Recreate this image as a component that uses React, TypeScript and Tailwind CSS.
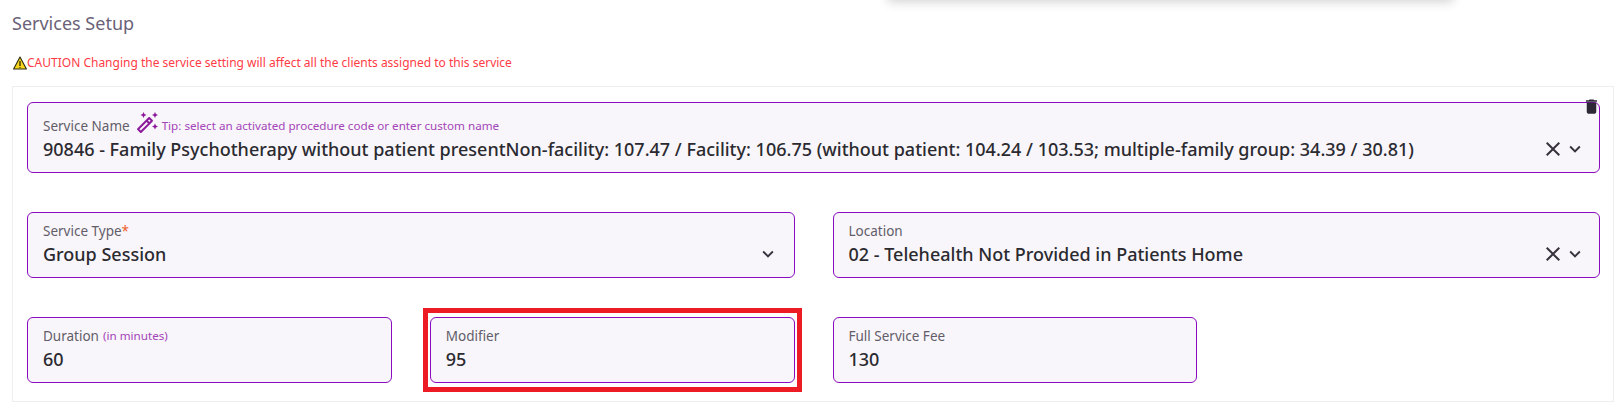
import { ReactNode } from "react";
import { MdClose, MdDelete, MdExpandMore, MdOutlineAutoFixHigh } from "react-icons/md";

interface FieldProps {
  label: ReactNode;
  value: string;
  className?: string;
  clearable?: boolean;
  select?: boolean;
}

function Field({ label, value, className = "h-[66px]", clearable, select }: FieldProps) {
  return (
    <div className={`flex items-end justify-between rounded-md border border-[#8a0cbe] bg-[#f8f6fa] pb-[11px] pl-[15px] ${clearable ? "pr-[13px]" : "pr-[15px]"} ${className}`}>
      <div className="min-w-0">
        <div className="flex h-5 items-center text-[13.5px] text-[#625d69]">{label}</div>
        <div className="mt-[1px] h-6 whitespace-nowrap text-[18px] leading-6 font-medium text-[#2b2a30]">{value}</div>
      </div>
      {select && (
        <div className="flex h-6 items-center text-[#37323d]">
          {clearable && <MdClose size={24} />}
          <MdExpandMore size={22} className={clearable ? "-ml-[1px]" : ""} />
        </div>
      )}
    </div>
  );
}

function WarningIcon() {
  return (
    <svg width="14" height="14" viewBox="0 0 14 14" className="ml-[1px] shrink-0">
      <path d="M7 1 L13.4 13 H0.6 Z" fill="#f7d51d" stroke="#2a2a10" strokeWidth="1.1" strokeLinejoin="round" />
      <path d="M7 5 V10" stroke="#3a3210" strokeWidth="1.4" />
      <path d="M7 11 V12" stroke="#3a3210" strokeWidth="1.2" />
    </svg>
  );
}

export default function App() {
  return (
    <div className="relative h-[409px] w-[1621px] overflow-hidden bg-white pl-[12px] pr-[7px] pt-[11px] font-['Noto_Sans',sans-serif]">
      {/* menu hanging in from above the crop */}
      <div className="absolute left-[888px] top-[-40px] h-[40px] w-[565px] bg-white shadow-[0_2px_10px_rgba(0,0,0,0.18)]" />

      <h2 className="h-6 text-[18px] leading-6 text-[#6a6278]">Services Setup</h2>
      <div className="mt-[20px] flex h-[16px] items-center text-[12px] text-[#ff3b45]">
        <WarningIcon />
        <span>CAUTION Changing the service setting will affect all the clients assigned to this service</span>
      </div>

      <div className="mt-[15px] h-[316px] border border-[#eeeeee] pl-[14px] pr-[13px] pt-[15px]">
        <div className="relative">
          <Field
            className="h-[71px]"
            clearable
            select
            label={
              <>
                Service Name
                <MdOutlineAutoFixHigh size={24} className="ml-[5px] mr-[3px] -mt-[6px] text-[#8b1a9b]" />
                <span className="text-[11.65px] text-[#a445b8]">Tip: select an activated procedure code or enter custom name</span>
              </>
            }
            value="90846 - Family Psychotherapy without patient presentNon-facility: 107.47 / Facility: 106.75 (without patient: 104.24 / 103.53; multiple-family group: 34.39 / 30.81)"
          />
          <MdDelete size={19} className="absolute -top-[5px] right-[-1px] text-[#2e2836]" />
        </div>

        <div className="mt-[39px] grid grid-cols-2 gap-x-[38px]">
          <Field
            select
            label={
              <>
                Service Type<span className="text-[#f05a28]">*</span>
              </>
            }
            value="Group Session"
          />
          <Field select clearable label="Location" value="02 - Telehealth Not Provided in Patients Home" />
        </div>

        <div className="mt-[39px] grid grid-cols-4 gap-x-[38px]">
          <Field
            label={
              <>
                Duration
                <span className="ml-1 text-[11.65px] text-[#a445b8]">(in minutes)</span>
              </>
            }
            value="60"
          />
          <div className="relative">
            <Field label="Modifier" value="95" />
            <div className="absolute -inset-x-[7px] -inset-y-[9px] border-[5px] border-[#ed1c24]" />
          </div>
          <Field label="Full Service Fee" value="130" />
        </div>
      </div>
    </div>
  );
}
